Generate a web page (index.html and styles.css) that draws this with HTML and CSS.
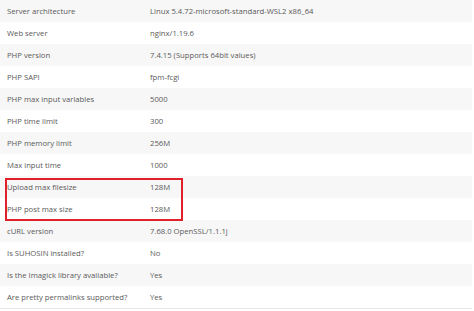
FILE: index.html
```html
<!DOCTYPE html>
<html>
<head>
<meta charset="utf-8">
<link rel="stylesheet" href="styles.css">
</head>
<body>
<div class="wrap">
<table class="info">
<colgroup><col class="c1"><col class="c2"></colgroup>
<tbody>
<tr><td>Server architecture</td><td>Linux 5.4.72-microsoft-standard-WSL2 x86_64</td></tr>
<tr><td>Web server</td><td>nginx/1.19.6</td></tr>
<tr><td>PHP version</td><td>7.4.15 (Supports 64bit values)</td></tr>
<tr><td>PHP SAPI</td><td>fpm-fcgi</td></tr>
<tr><td>PHP max input variables</td><td>5000</td></tr>
<tr><td>PHP time limit</td><td>300</td></tr>
<tr><td>PHP memory limit</td><td>256M</td></tr>
<tr><td>Max input time</td><td>1000</td></tr>
<tr><td>Upload max filesize</td><td>128M</td></tr>
<tr><td>PHP post max size</td><td>128M</td></tr>
<tr><td>cURL version</td><td>7.68.0 OpenSSL/1.1.1j</td></tr>
<tr><td>Is SUHOSIN installed?</td><td>No</td></tr>
<tr><td>Is the Imagick library available?</td><td>Yes</td></tr>
<tr><td>Are pretty permalinks supported?</td><td>Yes</td></tr>
</tbody>
</table>
<div class="highlight"></div>
</div>
</body>
</html>
```
FILE: styles.css
```css
html, body {
  margin: 0;
  padding: 0;
  background: #fff;
}
.wrap {
  position: relative;
  width: 472px;
}
.info {
  width: 472px;
  table-layout: fixed;
  border-collapse: collapse;
  border-bottom: 1px solid #e8e8e8;
  font-family: "Open Sans", "Noto Sans", sans-serif;
  font-size: 7.7px;
  color: #5a5a5a;
}
.c1 {
  width: 143px;
}
.info td {
  height: 22px;
  padding: 0 0 0 7px;
  vertical-align: middle;
  white-space: nowrap;
  overflow: hidden;
  box-sizing: border-box;
}
.info tr:nth-child(odd) td {
  background: #f7f7f7;
}
.highlight {
  position: absolute;
  left: 5px;
  top: 178px;
  width: 174px;
  height: 39px;
  border: 2px solid #e0212b;
}
```
